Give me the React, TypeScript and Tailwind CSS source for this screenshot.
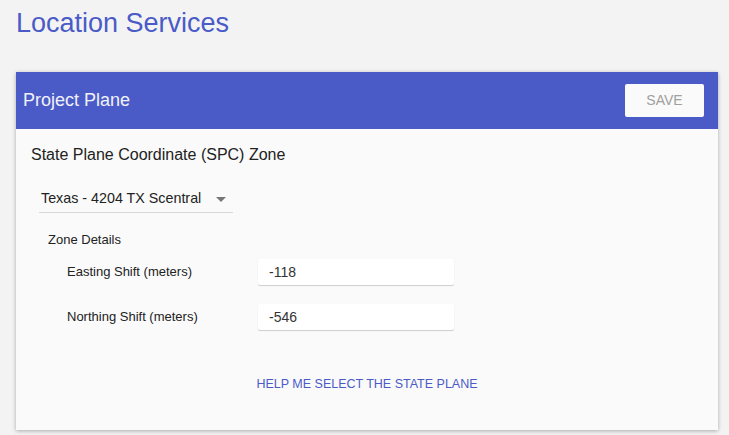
export default function App() {
    const rows = [
        { label: "Easting Shift (meters)", value: "-118" },
        { label: "Northing Shift (meters)", value: "-546" },
    ];

    return (
        <div className="h-[435px] bg-[#f3f3f3] px-4 pt-[7px] font-['Liberation_Sans',Arial,sans-serif] overflow-hidden">
            <h1 className="text-[27px] leading-[32px] text-[#4a5bc8]">Location Services</h1>

            {/* Card */}
            <div className="mt-[33px] w-[702px] bg-[#fafafa] shadow-[0_1px_4px_rgba(0,0,0,0.3)]">
                <header className="flex h-[57px] items-center justify-between bg-[#4a5bc7] pl-[7px] pr-[14px]">
                    <h2 className="text-[18px] text-[#f1f1f8]">Project Plane</h2>
                    <button className="h-[33px] w-[79px] rounded-[2px] bg-[#fafafa] text-[14px] text-[#a0a0a0]">
                        SAVE
                    </button>
                </header>

                <div className="pl-[15px] pt-[14px] pb-[38px]">
                    <h3 className="text-[16px] leading-[24px] text-[#222]">
                        State Plane Coordinate (SPC) Zone
                    </h3>

                    {/* Zone select */}
                    <div className="ml-[8px] mt-[19px] flex h-[27px] w-[194px] items-center justify-between border-b border-[#d8d8d8] pl-[2px] pr-[7px]">
                        <span className="text-[14.3px] text-[#222]">Texas - 4204 TX Scentral</span>
                        <span className="h-0 w-0 border-x-[5px] border-t-[5px] border-x-transparent border-t-[#777]" />
                    </div>

                    <div className="ml-[17px] mt-[19px] text-[13px] leading-[16px] text-[#222]">Zone Details</div>

                    <div className="mt-[11px] flex flex-col gap-[19px]">
                        {rows.map((r) => (
                            <div key={r.label} className="ml-[36px] flex items-center">
                                <span className="w-[191px] text-[13px] text-[#222]">{r.label}</span>
                                <div className="flex h-[26px] w-[196px] items-center rounded-[2px] bg-white pl-[11px] text-[14px] text-[#333] shadow-[0_1px_1px_rgba(0,0,0,0.18)]">
                                    {r.value}
                                </div>
                            </div>
                        ))}
                    </div>

                    <div className="mt-[46px] -ml-[15px] text-center text-[12.5px] leading-[16px] text-[#4a5bc8]">
                        HELP ME SELECT THE STATE PLANE
                    </div>
                </div>
            </div>
        </div>
    );
}
